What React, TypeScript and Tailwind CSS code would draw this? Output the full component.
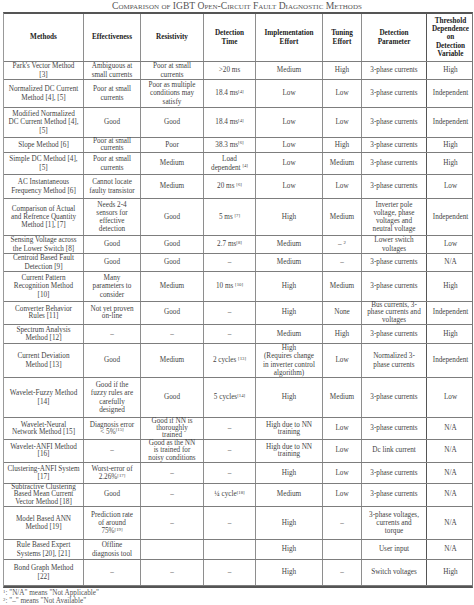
import React from 'react';

type Row = { h: number; cells: string[]; tight?: boolean };

// "^[4]" or "^2" in a cell is drawn as a superscript, "\n" is a line break
const renderText = (text: string) =>
  text.split('\n').map((line, i) => {
    const parts = line.split(/(\^\[[^\]]*\]|\^\d)/g).filter(Boolean);
    return (
      <React.Fragment key={i}>
        {i > 0 && <br />}
        {parts.map((p, j) =>
          p.startsWith('^') ? (
            <sup key={j} className="text-[4.8px]">
              {p.slice(1)}
            </sup>
          ) : (
            <span key={j}>{p}</span>
          )
        )}
      </React.Fragment>
    );
  });

const header = [
  'Methods',
  'Effectiveness',
  'Resistivity',
  'Detection\nTime',
  'Implementation\nEffort',
  'Tuning\nEffort',
  'Detection\nParameter',
  'Threshold\nDependence\non\nDetection\nVariable',
];

const rows: Row[] = [
  { h: 18, cells: ["Park's Vector Method\n[3]", 'Ambiguous at\nsmall currents', 'Poor at small\ncurrents', '>20 ms', 'Medium', 'High', '3-phase currents', 'High'] },
  { h: 28, cells: ['Normalized DC Current\nMethod [4], [5]', 'Poor at small\ncurrents', 'Poor as multiple\nconditions may\nsatisfy', '18.4 ms^[4]', 'Low', 'Low', '3-phase currents', 'Independent'] },
  { h: 30, cells: ['Modified Normalized\nDC Current Method [4],\n[5]', 'Good', 'Good', '18.4 ms^[4]', 'Low', 'Low', '3-phase currents', 'Independent'] },
  { h: 15, tight: true, cells: ['Slope Method [6]', 'Poor at small\ncurrents', 'Poor', '38.3 ms^[6]', 'Low', 'High', '3-phase currents', 'High'] },
  { h: 22, cells: ['Simple DC Method [4],\n[5]', 'Poor at small\ncurrents', 'Medium', 'Load\ndependent ^[4]', 'Low', 'Medium', '3-phase currents', 'High'] },
  { h: 24, cells: ['AC Instantaneous\nFrequency Method [6]', 'Cannot locate\nfaulty transistor', 'Medium', '20 ms ^[6]', 'Low', 'Low', '3-phase currents', 'Low'] },
  { h: 37, cells: ['Comparison of Actual\nand Refrence Quantity\nMethod [1], [7]', 'Needs 2-4\nsensors for\neffective\ndetection', 'Good', '5 ms ^[7]', 'High', 'Medium', 'Inverter pole\nvoltage, phase\nvoltages and\nneutral voltage', 'Independent'] },
  { h: 18, cells: ['Sensing Voltage across\nthe Lower Switch [8]', 'Good', 'Good', '2.7 ms^[8]', 'Medium', '– ^2', 'Lower switch\nvoltages', 'Low'] },
  { h: 18, cells: ['Centroid Based Fault\nDetection [9]', 'Good', 'Good', '–', 'Medium', '–', '3-phase currents', 'N/A'] },
  { h: 30, cells: ['Current Pattern\nRecognition Method\n[10]', 'Many\nparameters to\nconsider', 'Medium', '10 ms ^[10]', 'High', 'Medium', '3-phase currents', 'High'] },
  { h: 23, tight: true, cells: ['Converter Behavior\nRules [11]', 'Not yet proven\non-line', 'Good', '–', 'High', 'None', 'Bus currents, 3-\nphase currents and\nvoltages', 'Independent'] },
  { h: 19, cells: ['Spectrum Analysis\nMethod [12]', '–', '–', '–', 'Medium', 'High', '3-phase currents', 'High'] },
  { h: 34, cells: ['Current Deviation\nMethod [13]', 'Good', 'Medium', '2 cycles ^[13]', 'High\n(Requires change\nin inverter control\nalgorithm)', 'Low', 'Normalized 3-\nphase currents', 'Independent'] },
  { h: 40, cells: ['Wavelet-Fuzzy Method\n[14]', 'Good if the\nfuzzy rules are\ncarefully\ndesigned', 'Good', '5 cycles^[14]', 'High', 'Medium', '3-phase currents', 'Low'] },
  { h: 22, tight: true, cells: ['Wavelet-Neural\nNetwork Method [15]', 'Diagnosis error\n< 5%^[15]', 'Good if NN is\nthoroughly\ntrained', '–', 'High due to NN\ntraining', 'Low', '3-phase currents', 'N/A'] },
  { h: 23, tight: true, cells: ['Wavelet-ANFI Method\n[16]', '–', 'Good as the NN\nis trained for\nnoisy conditions', '–', 'High due to NN\ntraining', 'Low', 'Dc link current', 'N/A'] },
  { h: 21, cells: ['Clustering-ANFI System\n[17]', 'Worst-error of\n2.26%^[17]', '–', '–', 'High', 'Low', '3-phase currents', 'N/A'] },
  { h: 23, tight: true, cells: ['Subtractive Clustering\nBased Mean Current\nVector Method [18]', 'Good', '–', '¼ cycle^[18]', 'Medium', 'Low', '3-phase currents', 'N/A'] },
  { h: 33, cells: ['Model Based ANN\nMethod [19]', 'Prediction rate\nof around\n75%^[19]', '–', '–', 'High', '–', '3-phase voltages,\ncurrents and\ntorque', 'N/A'] },
  { h: 20, cells: ['Rule Based Expert\nSystems [20], [21]', 'Offline\ndiagnosis tool', '', '', 'High', '', 'User input', 'N/A'] },
  { h: 26, cells: ['Bond Graph Method\n[22]', '–', '–', '–', 'High', '–', 'Switch voltages', 'High'] },
];

const cellBorder = (i: number) =>
  i === 7 ? '' : i === 6 ? 'border-r border-r-[#555]' : 'border-r border-r-[#8e8e8e]';

const TableRow: React.FC<{ row: Row; bold?: boolean }> = ({ row, bold }) => (
  <div
    className={`grid grid-cols-[80px_57px_63px_52px_67px_39px_65px_47px] border-b border-b-[#7d7d7d] ${
      row.tight ? 'leading-[7.1px]' : ''
    }`}
    style={{ height: row.h }}
  >
    {row.cells.map((c, i) => (
      <div
        key={i}
        className={`flex items-center justify-center text-center whitespace-nowrap ${cellBorder(i)} ${
          bold ? 'font-bold text-[#222]' : 'text-[#444]'
        }`}
      >
        <div>{renderText(c)}</div>
      </div>
    ))}
  </div>
);

export default function App() {
  return (
    <div className="w-[474px] h-[605px] bg-white overflow-hidden font-['Liberation_Serif','Times_New_Roman',serif] text-[7.2px] leading-[8.2px]">
      <div className="h-[12px] flex items-center justify-center text-[9.6px] text-[#555] [font-variant:small-caps]">
        Comparison of IGBT Open-Circuit Fault Diagnostic Methods
      </div>
      <div className="ml-[3px] w-[470px] border-t-2 border-t-[#555] border-b-2 border-b-[#555] border-l border-l-[#999] border-r border-r-[#777]">
        <TableRow row={{ h: 48, cells: header }} bold />
        {rows.map((r, i) => (
          <TableRow key={i} row={r} />
        ))}
      </div>
      <div className="pl-[3px] pt-[1px] text-[#555]">
        <div>
          <sup className="text-[4.8px]">1</sup>: "N/A" means "Not Applicable"
        </div>
        <div>
          <sup className="text-[4.8px]">2</sup>: "–" means "Not Available"
        </div>
      </div>
    </div>
  );
}
